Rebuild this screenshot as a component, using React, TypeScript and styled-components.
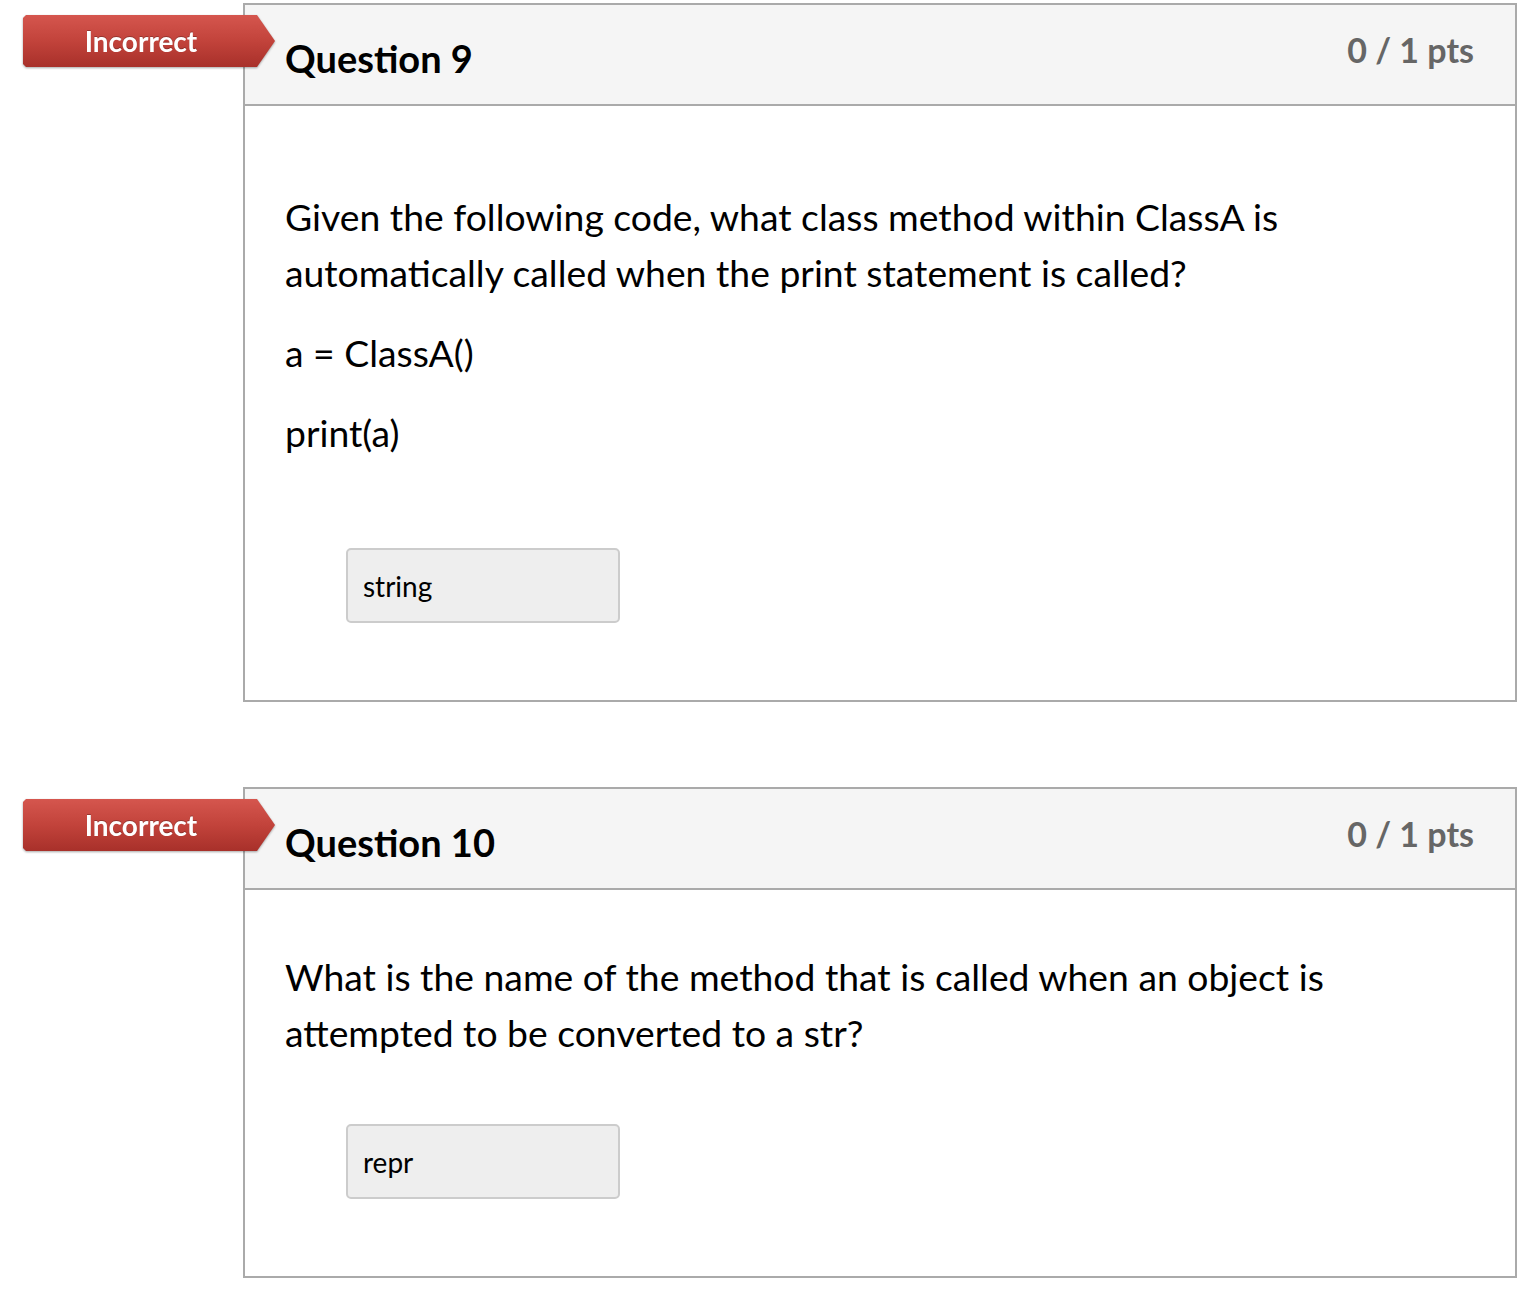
import React from "react";
import styled, { createGlobalStyle } from "styled-components";

const Global = createGlobalStyle`
  html, body { margin: 0; padding: 0; background: #fff; }
  body { font-family: Lato, "Open Sans", sans-serif; color: #000; }
`;

const Page = styled.div`
  padding: 3px 15px 0 0;
  display: flex;
  flex-direction: column;
  gap: 85px;
`;

const Row = styled.div`
  position: relative;
  padding-left: 243px;
`;

const BadgeWrap = styled.div`
  position: absolute;
  left: 23px;
  top: 12px;
  filter: drop-shadow(0 1px 1px rgba(0, 0, 0, 0.35));
  z-index: 2;
`;

const Badge = styled.div`
  width: 252px;
  height: 52px;
  box-sizing: border-box;
  padding-right: 16px;
  display: flex;
  align-items: center;
  justify-content: center;
  background: linear-gradient(to bottom, #d5564e 0%, #c2433b 50%, #a8302a 100%);
  clip-path: polygon(3px 0, 234px 0, 252px 26px, 234px 52px, 3px 52px, 0 49px, 0 3px);
  color: #fff;
  font-weight: 700;
  font-size: 28px;
  text-shadow: 0 -1px 0 rgba(0, 0, 0, 0.25);
`;

const Panel = styled.div`
  border: 2px solid #aaaaaa;
  background: #fff;
`;

const Header = styled.div`
  background: #f5f5f5;
  border-bottom: 2px solid #aaaaaa;
  height: 99px;
  display: flex;
  justify-content: space-between;
  align-items: flex-start;
  padding: 0 41px;
`;

const Title = styled.h2`
  margin: 30px 0 0 -1px;
  font-size: 38px;
  line-height: 46px;
  font-weight: 700;
  color: #000;
`;

const Points = styled.div`
  margin-top: 24px;
  font-size: 34px;
  line-height: 42px;
  font-weight: 700;
  color: #666666;
`;

const Body = styled.div<{ $top: number }>`
  padding: ${(p) => p.$top}px 41px 77px;
  display: flex;
  flex-direction: column;
  align-items: flex-start;
`;

const Text = styled.div`
  max-width: 1150px;
  margin-left: -1px;
`;

const Para = styled.p`
  margin: 0 0 24px;
  font-size: 37.3px;
  line-height: 56px;
  color: #000;
  &:last-of-type { margin-bottom: 0; }
`;

const Answer = styled.div<{ $gap: number }>`
  margin: ${(p) => p.$gap}px 0 0 60px;
  width: 274px;
  height: 75px;
  box-sizing: border-box;
  background: #eeeeee;
  border: 2px solid #cccccc;
  border-radius: 5px;
  padding-left: 15px;
  display: flex;
  align-items: center;
  font-size: 28px;
  color: #000;
`;

type Q = {
  num: number;
  paras: string[];
  answer: string;
  top: number;
  gap: number;
};

const questions: Q[] = [
  {
    num: 9,
    paras: [
      "Given the following code, what class method within ClassA is automatically called when the print statement is called?",
      "a = ClassA()",
      "print(a)",
    ],
    answer: "string",
    top: 83,
    gap: 87,
  },
  {
    num: 10,
    paras: [
      "What is the name of the method that is called when an object is attempted to be converted to a str?",
    ],
    answer: "repr",
    top: 59,
    gap: 63,
  },
];

export default function App() {
  return (
    <>
      <Global />
      <Page>
        {questions.map((q) => (
          <Row key={q.num}>
            <BadgeWrap>
              <Badge>Incorrect</Badge>
            </BadgeWrap>
            <Panel>
              <Header>
                <Title>Question {q.num}</Title>
                <Points>0 / 1 pts</Points>
              </Header>
              <Body $top={q.top}>
                <Text>
                  {q.paras.map((p, i) => (
                    <Para key={i}>{p}</Para>
                  ))}
                </Text>
                <Answer $gap={q.gap}>{q.answer}</Answer>
              </Body>
            </Panel>
          </Row>
        ))}
      </Page>
    </>
  );
}
